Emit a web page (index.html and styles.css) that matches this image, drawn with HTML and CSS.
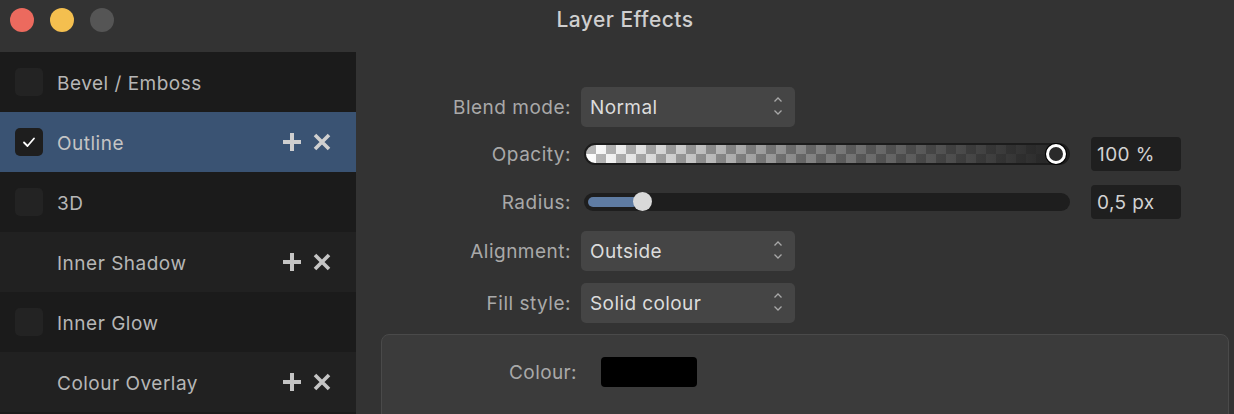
FILE: index.html
```html
<!DOCTYPE html>
<html>
<head>
<meta charset="utf-8">
<link rel="stylesheet" href="styles.css">
</head>
<body>
<div class="window">
  <header class="titlebar">
    <div class="lights">
      <span class="light red"></span>
      <span class="light yellow"></span>
      <span class="light gray"></span>
    </div>
    <div class="title">Layer Effects</div>
    <div></div>
  </header>
  <div class="content">
    <aside class="effects">
      <div class="effect dark"><span class="check"></span><span class="name">Bevel / Emboss</span></div>
      <div class="effect selected"><span class="check on"><svg width="14" height="12" viewBox="0 0 14 12"><path d="M2 6.5 L5.5 10 L12 2.5" fill="none" stroke="#fff" stroke-width="1.8" stroke-linecap="round" stroke-linejoin="round"/></svg></span><span class="name">Outline</span>
        <span class="actions"><svg class="plus" width="20" height="20" viewBox="0 0 20 20"><path d="M10 1V19M1 10H19" stroke="#cfcfcf" stroke-width="4"/></svg><svg class="cross" width="18" height="18" viewBox="0 0 18 18"><path d="M2 2L16 16M16 2L2 16" stroke="#cfcfcf" stroke-width="3.6"/></svg></span></div>
      <div class="effect dark"><span class="check"></span><span class="name">3D</span></div>
      <div class="effect light-row"><span class="nocheck"></span><span class="name">Inner Shadow</span>
        <span class="actions"><svg class="plus" width="20" height="20" viewBox="0 0 20 20"><path d="M10 1V19M1 10H19" stroke="#c4c4c4" stroke-width="4"/></svg><svg class="cross" width="18" height="18" viewBox="0 0 18 18"><path d="M2 2L16 16M16 2L2 16" stroke="#c4c4c4" stroke-width="3.6"/></svg></span></div>
      <div class="effect dark"><span class="check"></span><span class="name">Inner Glow</span></div>
      <div class="effect light-row"><span class="nocheck"></span><span class="name">Colour Overlay</span>
        <span class="actions"><svg class="plus" width="20" height="20" viewBox="0 0 20 20"><path d="M10 1V19M1 10H19" stroke="#c4c4c4" stroke-width="4"/></svg><svg class="cross" width="18" height="18" viewBox="0 0 18 18"><path d="M2 2L16 16M16 2L2 16" stroke="#c4c4c4" stroke-width="3.6"/></svg></span></div>
    </aside>
    <main class="props">
      <div class="row r-blend">
        <label class="lbl">Blend mode:</label>
        <div class="select"><span>Normal</span><svg class="chev" width="10" height="22" viewBox="0 0 10 22"><path d="M1.5 5.5L5 2L8.5 5.5M1.5 14.5L5 18L8.5 14.5" fill="none" stroke="#a8a8a8" stroke-width="1.3"/></svg></div>
      </div>
      <div class="row r-opacity">
        <label class="lbl">Opacity:</label>
        <div class="track opacity-track"><span class="knob ring"></span></div>
        <div class="value">100 %</div>
      </div>
      <div class="row r-radius">
        <label class="lbl">Radius:</label>
        <div class="track radius-track"><span class="fill" style="width:50px"></span><span class="knob solid" style="left:49px"></span></div>
        <div class="value">0,5 px</div>
      </div>
      <div class="row r-align">
        <label class="lbl">Alignment:</label>
        <div class="select"><span>Outside</span><svg class="chev" width="10" height="22" viewBox="0 0 10 22"><path d="M1.5 5.5L5 2L8.5 5.5M1.5 14.5L5 18L8.5 14.5" fill="none" stroke="#a8a8a8" stroke-width="1.3"/></svg></div>
      </div>
      <div class="row r-fill">
        <label class="lbl">Fill style:</label>
        <div class="select"><span>Solid colour</span><svg class="chev" width="10" height="22" viewBox="0 0 10 22"><path d="M1.5 5.5L5 2L8.5 5.5M1.5 14.5L5 18L8.5 14.5" fill="none" stroke="#a8a8a8" stroke-width="1.3"/></svg></div>
      </div>
      <section class="panel">
        <div class="panel-row">
          <label class="plbl">Colour:</label>
          <div class="swatch"></div>
        </div>
      </section>
    </main>
  </div>
</div>
</body>
</html>
```
FILE: styles.css
```css
* { box-sizing: border-box; }
html, body { margin: 0; padding: 0; }
body {
  width: 1234px;
  height: 414px;
  overflow: hidden;
  background: #333333;
  font-family: Inter, "Noto Sans", sans-serif;
  color: #b8b8b8;
}
.window { width: 1234px; height: 414px; display: flex; flex-direction: column; overflow: hidden; }

.titlebar {
  height: 52px;
  flex: none;
  display: grid;
  grid-template-columns: 1fr auto 1fr;
  align-items: start;
  padding-top: 8px;
}
.lights { display: flex; gap: 16px; padding-left: 10px; }
.light { width: 24px; height: 24px; border-radius: 50%; display: block; }
.red { background: #ec6a5e; }
.yellow { background: #f4bf4f; }
.gray { background: #555555; }
.title {
  font-size: 21px;
  line-height: 24px;
  font-weight: 500;
  letter-spacing: 0.45px;
  color: #cfcfcf;
  padding-left: 16px;
}

.content { flex: 1; display: flex; min-height: 0; overflow: hidden; }

.effects { width: 356px; flex: none; background: #1b1b1b; }
.effect {
  height: 60px;
  display: flex;
  align-items: center;
  padding-left: 15px;
  padding-right: 25px;
  font-size: 19px;
  letter-spacing: 0.5px;
  color: #b6b6b6;
}
.effect .name { padding-top: 2px; }
.effect.dark { background: #1b1b1b; }
.effect.light-row { background: #212121; }
.effect.selected { background: #3a5373; color: #c4c4c4; }
.check {
  width: 28px; height: 28px; border-radius: 5px;
  background: #232323;
  margin-right: 14px;
  display: flex; align-items: center; justify-content: center;
  flex: none;
}
.check.on { background: #1e1e1e; }
.nocheck { width: 28px; margin-right: 14px; flex: none; }
.actions { margin-left: auto; display: flex; align-items: center; gap: 11px; }

.props { flex: 1; padding-top: 35px; }
.row { display: flex; align-items: center; }
.lbl {
  width: 215px;
  text-align: right;
  margin-right: 10px;
  font-size: 19px;
  letter-spacing: 0.5px;
  color: #a9a9a9;
}
.r-blend { height: 40px; margin-bottom: 10px; }
.r-opacity { height: 34px; margin-bottom: 14px; }
.r-radius { height: 34px; margin-bottom: 12px; }
.r-align { height: 40px; margin-bottom: 12px; }
.r-fill { height: 40px; margin-bottom: 11px; }

.select {
  width: 214px; height: 40px;
  background: #454545;
  border-radius: 5px;
  display: flex; align-items: center; justify-content: space-between;
  padding: 0 12px 0 9px;
  font-size: 19px;
  letter-spacing: 0.4px;
  color: #dcdcdc;
}

.track { position: relative; width: 486px; margin-left: 3px; }
.opacity-track {
  height: 22px;
  border-radius: 11px;
  border: 2px solid #1c1c1c;
  background:
    linear-gradient(to right, rgba(34,34,34,0) 0%, rgba(34,34,34,0.55) 45%, rgba(34,34,34,1) 100%),
    conic-gradient(#ffffff 25%, #b9b9b9 0 50%, #ffffff 0 75%, #b9b9b9 0) 0 0 / 20px 18px;
}
.radius-track {
  height: 18px;
  border-radius: 9px;
  background: #1e1e1e;
}
.fill {
  position: absolute; left: 4px; top: 4px; height: 10px;
  border-radius: 5px;
  background: #5f7ca3;
}
.knob { position: absolute; border-radius: 50%; }
.knob.ring {
  width: 20px; height: 20px;
  right: 2px; top: -1px;
  border: 3px solid #ffffff;
  background: #2a2a2a;
  box-shadow: 0 0 0 1px #000;
}
.knob.solid {
  width: 19px; height: 19px; top: -1px;
  background: #d9d9d9;
}
.value {
  width: 90px; height: 34px;
  margin-left: 21px;
  background: #1f1f1f;
  border-radius: 4px;
  padding-left: 6px;
  display: flex; align-items: center;
  font-size: 19px;
  letter-spacing: 0.4px;
  color: #d2d2d2;
}

.panel {
  margin-left: 25px;
  margin-right: 5px;
  height: 100px;
  background: #3b3b3b;
  border: 1px solid #4a4a4a;
  border-radius: 8px;
  padding-top: 22px;
}
.panel-row { display: flex; align-items: center; }
.plbl {
  width: 195px;
  text-align: right;
  margin-right: 24px;
  font-size: 19px;
  letter-spacing: 0.4px;
  color: #a9a9a9;
}
.swatch { width: 96px; height: 30px; background: #000; border-radius: 4px; }
```
